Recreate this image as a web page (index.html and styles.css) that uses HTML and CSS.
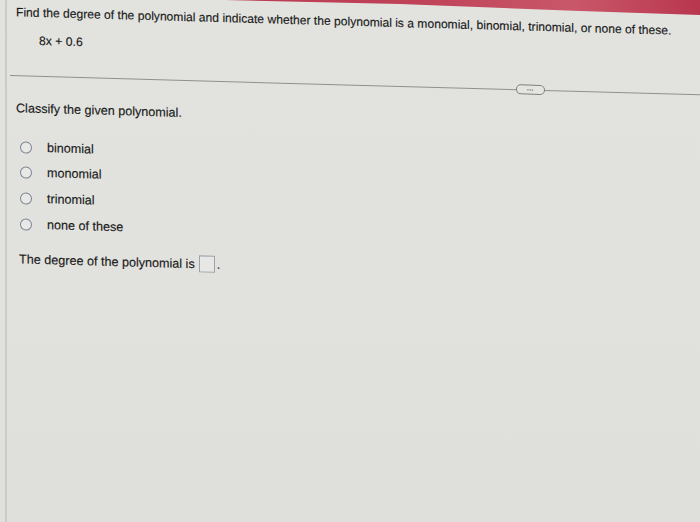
FILE: index.html
```html
<!DOCTYPE html>
<html>
<head>
<meta charset="utf-8">
<link rel="stylesheet" href="styles.css">
</head>
<body>
<div class="topbar"></div>
<div class="page">
  <div class="question">
    <p class="prompt">Find the degree of the polynomial and indicate whether the polynomial is a monomial, binomial, trinomial, or none of these.</p>
    <p class="expr">8x + 0.6</p>
  </div>
  <div class="divider">
    <span class="pill">&#8226;&#8226;&#8226;</span>
  </div>
  <div class="answer">
    <p class="classify">Classify the given polynomial.</p>
    <ul class="options">
      <li><span class="radio"></span><span>binomial</span></li>
      <li><span class="radio"></span><span>monomial</span></li>
      <li><span class="radio"></span><span>trinomial</span></li>
      <li><span class="radio"></span><span>none of these</span></li>
    </ul>
    <p class="degree">The degree of the polynomial is <span class="box"></span>.</p>
  </div>
</div>
</body>
</html>
```
FILE: styles.css
```css
html, body {
  margin: 0;
  padding: 0;
}
body {
  width: 700px;
  height: 522px;
  overflow: hidden;
  background:
    linear-gradient(90deg, transparent 5px, #cbccc8 5px, #cbccc8 7px, transparent 7px),
    linear-gradient(180deg, #e2e3df 0%, #e1e2de 60%, #dfe0dc 100%);
  font-family: "Liberation Sans", Arial, sans-serif;
  color: #1a1a1a;
  position: relative;
}
.topbar {
  position: absolute;
  left: 0;
  top: 0;
  width: 700px;
  height: 16px;
  background: linear-gradient(90deg, #b8354d 0%, #bf4258 60%, #c9576a 82%, #b9364e 100%);
  clip-path: polygon(225px 0, 700px 0, 700px 15px, 580px 11px, 400px 4px);
}
.page {
  height: 300px;
  box-sizing: border-box;
  margin-left: 7px;
  padding-top: 5px;
  transform: skewY(1.6deg);
  transform-origin: 0 0;
  -webkit-text-stroke: 0.15px #1a1a1a;
}
p { margin: 0; }
.prompt {
  font-size: 12.1px;
  line-height: 14px;
  padding-left: 9px;
}
.expr {
  font-size: 12.2px;
  line-height: 14px;
  padding-left: 32px;
  margin-top: 14px;
}
.divider {
  margin-top: 28px;
  margin-left: 3px;
  width: 690px;
  height: 1px;
  background: #8f908d;
  position: relative;
}
.pill {
  position: absolute;
  left: 506px;
  top: -5px;
  width: 27px;
  height: 8px;
  border: 1px solid #7f807d;
  border-radius: 5px;
  background: #e4e5e1;
  font-size: 5px;
  line-height: 8px;
  text-align: center;
  color: #555;
  letter-spacing: 0.5px;
  -webkit-text-stroke: 0;
}
.answer {
  padding-left: 9px;
  padding-top: 25px;
}
.classify {
  font-size: 12.6px;
  line-height: 15px;
}
.options {
  list-style: none;
  margin: 23px 0 0 0;
  padding: 0;
  display: flex;
  flex-direction: column;
  gap: 10.7px;
}
.options li {
  display: flex;
  align-items: center;
  font-size: 12.6px;
  height: 15px;
}
.radio {
  box-sizing: border-box;
  width: 12px;
  height: 12px;
  border: 1.7px solid #7a8391;
  border-radius: 50%;
  margin-left: 4px;
  margin-right: 15px;
  background: #e8e9e6;
  -webkit-text-stroke: 0;
}
.degree {
  font-size: 12.6px;
  margin-top: 19px;
  padding-left: 3px;
  display: flex;
  align-items: center;
  height: 17px;
}
.box {
  box-sizing: border-box;
  display: inline-block;
  width: 16px;
  height: 17px;
  border: 1px solid #9ba3ad;
  margin-left: 4px;
  margin-right: 2px;
  background: #e7e8e5;
  -webkit-text-stroke: 0;
}
```
